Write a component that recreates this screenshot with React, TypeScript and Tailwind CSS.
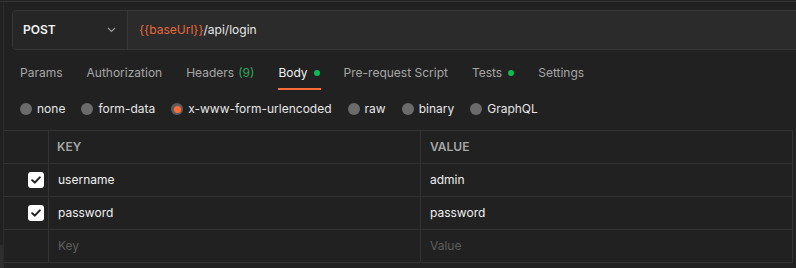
const tabs = [
  { label: "Params" },
  { label: "Authorization" },
  { label: "Headers", count: "(9)" },
  { label: "Body", dot: true, active: true },
  { label: "Pre-request Script" },
  { label: "Tests", dot: true },
  { label: "Settings" },
];

const bodyTypes = ["none", "form-data", "x-www-form-urlencoded", "raw", "binary", "GraphQL"];

const rows = [
  { key: "username", value: "admin" },
  { key: "password", value: "password" },
];

const Check = () => (
  <div className="w-[16px] h-[16px] rounded-[3px] bg-white flex items-center justify-center">
    <svg width="10" height="8" viewBox="0 0 10 8" fill="none">
      <path d="M1.2 4.2 L3.8 6.6 L8.8 1.4" stroke="#212121" strokeWidth="2" strokeLinecap="round" strokeLinejoin="round" />
    </svg>
  </div>
);

const App = () => {
  return (
    <div className="w-[796px] h-[268px] overflow-hidden bg-[#212121] text-[12px] flex flex-col" style={{ fontFamily: "Inter, 'Noto Sans', sans-serif" }}>
      <div className="h-[1px] bg-[#212121]" />
      <div className="h-[1px] bg-[#353535]" />
      <div className="flex flex-1">
        <div className="w-[3px] flex flex-col justify-end">
          <div className="h-[23px] bg-[#2e2e2e]" />
        </div>
        <div className="flex-1 border-l border-[#2c2c2c] flex flex-col min-w-0">
          {/* url bar */}
          <div className="mt-[8px] ml-[8px] w-[800px] h-[40px] flex border border-[#373737] rounded-l-[4px] overflow-hidden">
            <div className="w-[115px] shrink-0 bg-[#262626] border-r border-[#373737] flex items-center justify-between pl-[10px] pr-[11px]">
              <span className="font-semibold text-[#f2f2f2]">POST</span>
              <svg width="9" height="6" viewBox="0 0 9 6" fill="none">
                <path d="M1 1 L4.5 4.5 L8 1" stroke="#9a9a9a" strokeWidth="1.1" />
              </svg>
            </div>
            <div className="flex-1 bg-[#2b2b2b] flex items-center pl-[11px]">
              <span className="text-[#e8693a]">{"{{baseUrl}}"}</span>
              <span className="text-[#e6e6e6]">/api/login</span>
            </div>
          </div>

          {/* tabs */}
          <div className="mt-[12px] ml-[16px] flex gap-[24px]">
            {tabs.map((t) => (
              <div key={t.label} className="relative h-[28px] pt-[3px] flex items-start">
                <div className="flex items-center h-[16px] leading-[16px]">
                  <span className={t.active ? "text-[#f2f2f2]" : "text-[#a6a6a6]"}>{t.label}</span>
                  {t.count && <span className="ml-[4px] text-[#2fa55a]">{t.count}</span>}
                  {t.dot && <span className="ml-[6px] w-[6px] h-[6px] rounded-full bg-[#0cbb52]" />}
                </div>
                {t.active && <div className="absolute left-0 right-[-1px] bottom-0 h-[2px] bg-[#ff6c37]" />}
              </div>
            ))}
          </div>

          {/* body types */}
          <div className="mt-[11px] ml-[16px] h-[16px] flex items-center gap-[16px]">
            {bodyTypes.map((b) => (
              <div key={b} className="flex items-center gap-[5px]">
                {b === "x-www-form-urlencoded" ? (
                  <span className="w-[12px] h-[12px] rounded-full bg-[#5c5c5c] flex items-center justify-center">
                    <span className="w-[7px] h-[7px] rounded-full bg-[#ff6c37]" />
                  </span>
                ) : (
                  <span className="w-[12px] h-[12px] rounded-full bg-[#6b6b6b]" />
                )}
                <span className="text-[#e6e6e6] leading-[16px]">{b}</span>
              </div>
            ))}
          </div>

          {/* table */}
          <div className="mt-[13px] w-[789px] border-t border-[#333333]">
            <div className="h-[33px] flex border-b border-[#333333]">
              <div className="w-[45px] border-r border-[#333333]" />
              <div className="w-[372px] border-r border-[#333333] pl-[8px] flex items-center text-[12px] font-semibold text-[#a6a6a6]">KEY</div>
              <div className="w-[372px] border-r border-[#333333] pl-[9px] flex items-center text-[12px] font-semibold text-[#a6a6a6]">VALUE</div>
            </div>
            {rows.map((r) => (
              <div key={r.key} className="h-[33px] flex border-b border-[#333333]">
                <div className="w-[45px] border-r border-[#333333] flex items-center justify-end pr-[4px]">
                  <Check />
                </div>
                <div className="w-[372px] border-r border-[#333333] pl-[9px] flex items-center text-[#f0f0f0]">{r.key}</div>
                <div className="w-[372px] border-r border-[#333333] pl-[9px] flex items-center text-[#f0f0f0]">{r.value}</div>
              </div>
            ))}
            <div className="h-[33px] flex border-b border-[#333333]">
              <div className="w-[45px] border-r border-[#333333]" />
              <div className="w-[372px] border-r border-[#333333] pl-[9px] flex items-center text-[#5e5e5e]">Key</div>
              <div className="w-[372px] border-r border-[#333333] pl-[9px] flex items-center text-[#5e5e5e]">Value</div>
            </div>
          </div>
        </div>
      </div>
    </div>
  );
};

export default App;
